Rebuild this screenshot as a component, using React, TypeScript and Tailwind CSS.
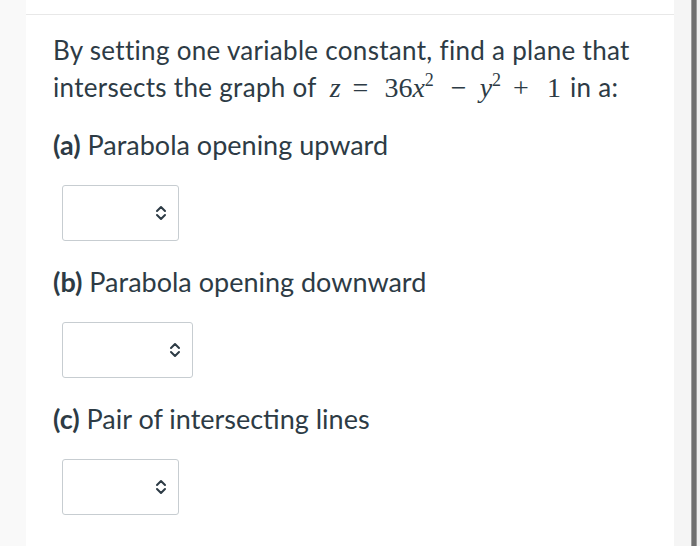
import React from "react";

function Chevrons() {
  return (
    <svg width="12" height="18" viewBox="0 0 12 18" fill="none" stroke="#2d3b45" strokeWidth="2" strokeLinecap="round" strokeLinejoin="round">
      <path d="M2 7 L6 3 L10 7" />
      <path d="M2 11 L6 15 L10 11" />
    </svg>
  );
}

function SelectBox({ width }: { width: string }) {
  return (
    <div className={`${width} h-[56px] border border-[#c7cdd1] rounded-[3px] bg-white flex items-center justify-end pr-[11px]`}>
      <Chevrons />
    </div>
  );
}

function Part({ letter, label, width }: { letter: string; label: string; width: string }) {
  return (
    <div>
      <p className="text-[27px] leading-[32px] text-[#2d3b45]">
        <span className="font-bold">({letter})</span> {label}
      </p>
      <div className="mt-[24px] ml-[9px]">
        <SelectBox width={width} />
      </div>
    </div>
  );
}

export default function App() {
  return (
    <div
      className="w-[700px] h-[546px] grid grid-cols-[26px_648px_17px_6px_3px] bg-white overflow-hidden"
      style={{ fontFamily: "Lato, 'Noto Sans', sans-serif" }}
    >
      <div className="bg-[#f9f9f9]" />
      <div className="pt-[14px] overflow-hidden bg-white">
        <div className="h-full border-t border-[#e8e8e8] pl-[27px] pt-[17px]">
          <p className="text-[26px] leading-[37px] text-[#2d3b45] tracking-[0.3px] whitespace-nowrap">
            By setting one variable constant, find a plane that
            <br />
            intersects the graph of
            <span className="tracking-normal text-[28px] ml-[13px]" style={{ fontFamily: "'Liberation Serif', serif" }}>
              <i>z</i>
              <span className="ml-[12px]">=</span>
              <span className="ml-[16px]">36</span>
              <i>x</i>
              <sup className="text-[18px] -top-[0.6em]">2</sup>
              <span className="ml-[17px]">−</span>
              <i className="ml-[13px]">y</i>
              <sup className="text-[18px] -top-[0.6em]">2</sup>
              <span className="ml-[12px]">+</span>
              <span className="ml-[18px]">1</span>
            </span>
            <span className="ml-[9px]">in a:</span>
          </p>
          <div className="mt-[23px] flex flex-col gap-[25px]">
            <Part letter="a" label="Parabola opening upward" width="w-[117px]" />
            <Part letter="b" label="Parabola opening downward" width="w-[131px]" />
            <Part letter="c" label="Pair of intersecting lines" width="w-[117px]" />
          </div>
        </div>
      </div>
      <div className="bg-[#f5f5f5]" />
      <div className="bg-[#6f6f6f] border-x border-[#9c9c9c]" />
      <div className="bg-[#f0f0f0]" />
    </div>
  );
}
